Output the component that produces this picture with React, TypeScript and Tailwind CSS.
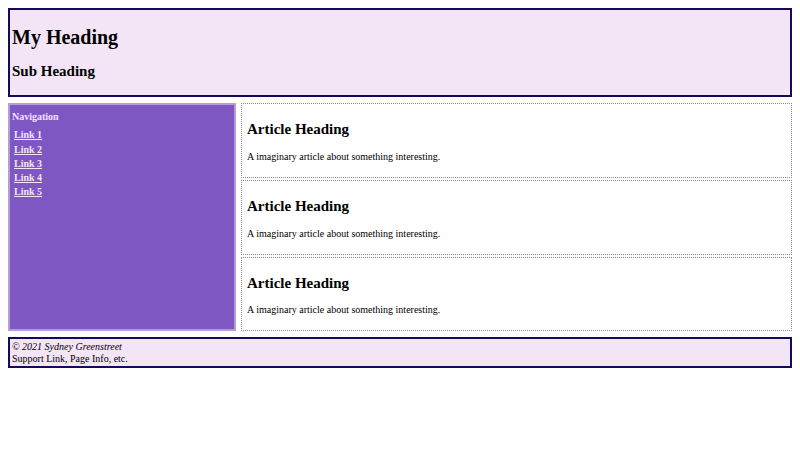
const links = ['Link 1', 'Link 2', 'Link 3', 'Link 4', 'Link 5'];

function Article() {
  return (
    <article className="border border-dotted border-[#8a8a8a] px-[5px] py-[4.5px] bg-white">
      <h2 className="text-[15px] leading-[17.25px] font-bold my-[12.45px]">Article Heading</h2>
      <p className="text-[10px] leading-[11.5px] my-[10px]">A imaginary article about something interesting.</p>
    </article>
  );
}

export default function App() {
  return (
    <div
      className="m-2 text-black text-[10px] leading-[11.5px]"
      style={{ fontFamily: '"Liberation Serif", "Times New Roman", serif' }}
    >
      {/* Header */}
      <header className="border-2 border-[#140a5c] bg-[#f3e5f5] px-[2px] py-[3px]">
        <h1 className="text-[20px] leading-[23px] font-bold my-[13.4px]">My Heading</h1>
        <h2 className="text-[15px] leading-[17.25px] font-bold my-[12.45px]">Sub Heading</h2>
      </header>

      {/* Main */}
      <div className="mt-[6px] grid grid-cols-[228px_1fr] gap-[5px]">
        <nav className="border-2 border-[#b39ddb] bg-[#7e57c2] p-[2px] text-[#f3e5f5]">
          <div className="mt-[4px] font-bold">Navigation</div>
          <ul className="mt-[5.4px] pl-[2px]">
            {links.map((l) => (
              <li key={l} className="leading-[14.2px]">
                <a href="#" className="font-bold underline">
                  {l}
                </a>
              </li>
            ))}
          </ul>
        </nav>
        <div className="flex flex-col gap-[2px]">
          <Article />
          <Article />
          <Article />
        </div>
      </div>

      {/* Footer */}
      <footer className="mt-[6px] border-2 border-[#140a5c] bg-[#f3e5f5] p-[2px]">
        <div className="italic">© 2021 Sydney Greenstreet</div>
        <div>Support Link, Page Info, etc.</div>
      </footer>
    </div>
  );
}
